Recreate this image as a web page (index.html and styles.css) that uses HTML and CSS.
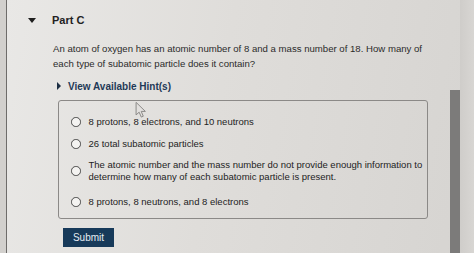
FILE: index.html
```html
<!DOCTYPE html>
<html>
<head>
<meta charset="utf-8">
<link rel="stylesheet" href="styles.css">
</head>
<body>
<div class="page">
  <div class="main">
    <div class="part-header">
      <span class="tri-down"></span>
      <span class="part-title">Part C</span>
    </div>
    <p class="question">An atom of oxygen has an atomic number of 8 and a mass number of 18. How many of each type of subatomic particle does it contain?</p>
    <div class="hint">
      <span class="tri-right"></span>
      <span class="hint-text">View Available Hint(s)</span>
    </div>
    <div class="choices">
      <div class="choice c1"><span class="radio"></span><span class="label">8 protons, 8 electrons, and 10 neutrons</span></div>
      <div class="choice c2"><span class="radio"></span><span class="label">26 total subatomic particles</span></div>
      <div class="choice c3"><span class="radio"></span><span class="label">The atomic number and the mass number do not provide enough information to determine how many of each subatomic particle is present.</span></div>
      <div class="choice c4"><span class="radio"></span><span class="label">8 protons, 8 neutrons, and 8 electrons</span></div>
    </div>
    <div class="submit">Submit</div>
  </div>
  <div class="scrollbar"></div>
  <div class="edge"></div>
  <svg class="cursor" width="12" height="18" viewBox="0 0 11 16">
    <path d="M1 1 L1 12.5 L3.8 10 L5.8 14.5 L7.6 13.7 L5.7 9.3 L9.5 9.3 Z" fill="#e2e0de" stroke="#8a8886" stroke-width="0.9" stroke-linejoin="round"/>
  </svg>
</div>
</body>
</html>
```
FILE: styles.css
```css
html, body {
  margin: 0;
  padding: 0;
}
body {
  width: 474px;
  height: 253px;
  overflow: hidden;
  font-family: "Liberation Sans", Arial, sans-serif;
  color: #2a2a2a;
}
.page {
  position: relative;
  display: flex;
  width: 474px;
  height: 253px;
  background: linear-gradient(100deg, #e9e8e6 0%, #dfddda 45%, #d6d4d1 100%);
  box-sizing: border-box;
  border-left: 6px solid #d2d0cd;
}
.main {
  flex: 1;
  border-left: 1.5px solid #6e6c6a;
  padding: 13px 0 0 21px;
}
.part-header {
  display: flex;
  align-items: center;
  height: 14px;
}
.tri-down {
  width: 0;
  height: 0;
  border-left: 4.5px solid transparent;
  border-right: 4.5px solid transparent;
  border-top: 5px solid #1e1e1e;
}
.part-title {
  margin-left: 16px;
  font-weight: bold;
  font-size: 11px;
  color: #222;
}
.question {
  margin: 14px 0 0 25px;
  width: 372px;
  font-size: 9.6px;
  line-height: 15px;
  color: #2b2b2b;
}
.hint {
  display: flex;
  align-items: center;
  margin: 8px 0 0 29px;
  height: 14px;
}
.tri-right {
  width: 0;
  height: 0;
  border-top: 4px solid transparent;
  border-bottom: 4px solid transparent;
  border-left: 4.5px solid #1d2f44;
}
.hint-text {
  margin-left: 7px;
  font-weight: bold;
  font-size: 10px;
  color: #1f3957;
}
.choices {
  margin: 7px 0 0 30px;
  width: 370px;
  height: 119px;
  box-sizing: border-box;
  border: 1px solid #8b8987;
  border-radius: 3px;
  padding-top: 15px;
}
.choice {
  display: flex;
  align-items: center;
  font-size: 9.5px;
  line-height: 12px;
  color: #232323;
}
.radio {
  flex: none;
  width: 7.5px;
  height: 7.5px;
  border: 1.2px solid #4a4a4a;
  border-radius: 50%;
  margin-left: 12px;
  background: #f4f3f1;
}
.label {
  margin-left: 8px;
  width: 340px;
}
.c2 { margin-top: 10px; }
.c3 { margin-top: 9px; }
.c4 { margin-top: 13px; }
.submit {
  margin: 9px 0 0 35px;
  width: 51px;
  height: 19px;
  background: #173a5a;
  color: #e6ecf2;
  font-size: 10px;
  line-height: 19px;
  text-align: center;
}
.scrollbar {
  flex: none;
  width: 10px;
  margin-top: 90px;
  background: #7c7b7a;
}
.edge {
  flex: none;
  width: 14px;
  background: linear-gradient(90deg, #cfcdca, #d8d6d3);
}
.cursor {
  position: absolute;
  left: 129px;
  top: 101px;
}
```
